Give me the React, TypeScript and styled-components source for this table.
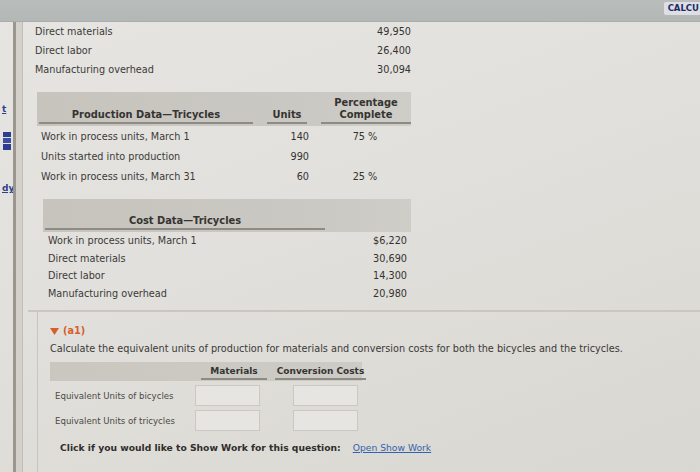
import React from "react";
import styled, { createGlobalStyle } from "styled-components";

const Global = createGlobalStyle`
  html, body { margin: 0; padding: 0; }
  body {
    width: 700px;
    height: 472px;
    overflow: hidden;
    background: linear-gradient(160deg, #e6e5e1 0%, #e2e0dc 45%, #d9d7d1 100%);
    font-family: "DejaVu Sans", Verdana, sans-serif;
    font-size: 9.7px;
    color: #3b3a38;
  }
`;

const TopBar = styled.div`
  height: 22px;
  background: linear-gradient(180deg, #b9bdbb 0%, #b3b8b6 100%);
  border-bottom: 1px solid #a9adab;
  box-sizing: border-box;
  display: flex;
  justify-content: flex-end;
  align-items: flex-start;
`;

const CalcButton = styled.div`
  margin-top: 2px;
  height: 13px;
  background: #dedfe4;
  border-radius: 2px 0 0 2px;
  color: #1e2a66;
  font-weight: bold;
  font-size: 8.5px;
  line-height: 13px;
  padding: 0 1px 0 4px;
  white-space: nowrap;
`;

const Main = styled.div`
  display: flex;
  height: 450px;
`;

const Sidebar = styled.div`
  width: 13px;
  display: flex;
  flex-direction: column;
  color: #2c3f8f;
  font-weight: bold;
  font-size: 9px;
  overflow: hidden;
`;

const SideFrag = styled.div<{ $top: number }>`
  margin-top: ${(p) => p.$top}px;
  padding-left: 2px;
  line-height: 10px;
  white-space: nowrap;
  text-decoration: underline;
`;

const SideIcon = styled.div`
  margin-top: 18px;
  padding-left: 3px;
  display: flex;
`;

const Panel = styled.div`
  flex: 1;
  border-left: 3px solid #9b978f;
  box-shadow: inset 6px 0 0 #d4d1cb, inset 7px 0 0 #c2beb7;
  display: flex;
  flex-direction: column;
`;

const SimpleBlock = styled.div`
  margin-left: 19px;
  width: 376px;
`;

const SimpleRow = styled.div`
  height: 19px;
  display: flex;
  align-items: center;
  justify-content: space-between;
`;

const Value = styled.span`
  color: #333230;
`;

const Table = styled.div<{ $left: number; $top: number; $width: number }>`
  margin-left: ${(p) => p.$left}px;
  margin-top: ${(p) => p.$top}px;
  width: ${(p) => p.$width}px;
`;

const HeadRow = styled.div<{ $cols: string; $height: number }>`
  display: grid;
  grid-template-columns: ${(p) => p.$cols};
  column-gap: 14px;
  align-items: end;
  height: ${(p) => p.$height}px;
  padding: 0 0 2px 2px;
  box-sizing: border-box;
  background: linear-gradient(90deg, #c6c4bd 0%, #cac8c2 70%, #cfcdc7 100%);
`;

const HeadCell = styled.div<{ $size?: number }>`
  font-weight: bold;
  font-size: ${(p) => p.$size || 9.9}px;
  color: #353432;
  text-align: center;
  line-height: 12px;
  padding-bottom: 1px;
  white-space: nowrap;
  border-bottom: 2px solid #8e8b85;
`;

const BodyRow = styled.div<{ $cols: string; $height: number; $pad: number }>`
  display: grid;
  grid-template-columns: ${(p) => p.$cols};
  column-gap: 14px;
  align-items: center;
  height: ${(p) => p.$height}px;
  padding: 0 4px 0 ${(p) => p.$pad}px;
`;

const Num = styled.span<{ $align?: string }>`
  text-align: ${(p) => p.$align || "right"};
  color: #333230;
`;

const Separator = styled.div`
  margin-top: 8px;
  margin-left: 12px;
  height: 2px;
  background: #cac7c1;
`;

const Section = styled.div`
  margin-left: 21px;
  flex: 1;
  border-left: 1px solid #c8c5be;
  padding: 13px 0 0 12px;
`;

const PartTitle = styled.div`
  display: flex;
  align-items: center;
  gap: 4px;
  color: #d5602c;
  font-weight: bold;
  line-height: 12px;
`;

const Prompt = styled.div`
  margin-top: 6px;
  line-height: 12px;
  color: #3a3937;
  white-space: nowrap;
`;

const AnswerHead = styled.div`
  margin-top: 7px;
  width: 312px;
  height: 19px;
  display: grid;
  grid-template-columns: 143px 66px 91px;
  column-gap: 8px;
  align-items: end;
  background: linear-gradient(90deg, #c9c7c0 0%, #cdcbc5 100%);
  padding-bottom: 1px;
  box-sizing: border-box;
`;

const AnswerGrid = styled.div`
  margin-top: 4px;
  display: grid;
  grid-template-columns: 145px 98px 65px;
  row-gap: 4px;
  align-items: center;
`;

const AnswerLabel = styled.div`
  padding-left: 5px;
  color: #4a4946;
  font-size: 8.6px;
  white-space: nowrap;
`;

const InputBox = styled.div`
  width: 65px;
  height: 21px;
  background: #e6e5e1;
  border: 1px solid #cbc8c2;
  box-sizing: border-box;
`;

const ShowWork = styled.div`
  margin-top: 11px;
  padding-left: 10px;
  display: flex;
  align-items: baseline;
  gap: 12px;
  line-height: 12px;
`;

const Bold = styled.span`
  font-weight: bold;
  font-size: 9.2px;
  color: #2f2e2c;
  white-space: nowrap;
`;

const Link = styled.a`
  color: #3461b0;
  font-size: 9.2px;
  text-decoration: underline;
  white-space: nowrap;
`;

const prodCols = "214px 40px 1fr";
const costCols = "280px 1fr";

export default function App() {
  return (
    <>
      <Global />
      <TopBar>
        <CalcButton>CALCU</CalcButton>
      </TopBar>
      <Main>
        <Sidebar>
          <SideFrag $top={82}>t</SideFrag>
          <SideIcon>
            <svg width="8" height="18" viewBox="0 0 8 18">
              <rect x="0" y="0" width="8" height="5" fill="#2c3f8f" />
              <rect x="0" y="6" width="8" height="5" fill="#3a4f9f" />
              <rect x="0" y="12" width="8" height="6" fill="#2c3f8f" />
            </svg>
          </SideIcon>
          <SideFrag $top={33}>dy</SideFrag>
        </Sidebar>
        <Panel>
          <SimpleBlock>
            <SimpleRow>
              <span>Direct materials</span>
              <Value>49,950</Value>
            </SimpleRow>
            <SimpleRow>
              <span>Direct labor</span>
              <Value>26,400</Value>
            </SimpleRow>
            <SimpleRow>
              <span>Manufacturing overhead</span>
              <Value>30,094</Value>
            </SimpleRow>
          </SimpleBlock>

          <Table $left={21} $top={13} $width={374}>
            <HeadRow $cols={prodCols} $height={34}>
              <HeadCell>Production Data—Tricycles</HeadCell>
              <HeadCell>Units</HeadCell>
              <HeadCell>
                Percentage
                <br />
                Complete
              </HeadCell>
            </HeadRow>
            <BodyRow $cols={prodCols} $height={20} $pad={4}>
              <span>Work in process units, March 1</span>
              <Num>140</Num>
              <Num $align="center">75 %</Num>
            </BodyRow>
            <BodyRow $cols={prodCols} $height={20} $pad={4}>
              <span>Units started into production</span>
              <Num>990</Num>
              <Num $align="center"></Num>
            </BodyRow>
            <BodyRow $cols={prodCols} $height={20} $pad={4}>
              <span>Work in process units, March 31</span>
              <Num>60</Num>
              <Num $align="center">25 %</Num>
            </BodyRow>
          </Table>

          <Table $left={27} $top={13} $width={368}>
            <HeadRow $cols={costCols} $height={33}>
              <HeadCell>Cost Data—Tricycles</HeadCell>
              <span />
            </HeadRow>
            <BodyRow $cols={costCols} $height={17.5} $pad={5}>
              <span>Work in process units, March 1</span>
              <Num>$6,220</Num>
            </BodyRow>
            <BodyRow $cols={costCols} $height={17.5} $pad={5}>
              <span>Direct materials</span>
              <Num>30,690</Num>
            </BodyRow>
            <BodyRow $cols={costCols} $height={17.5} $pad={5}>
              <span>Direct labor</span>
              <Num>14,300</Num>
            </BodyRow>
            <BodyRow $cols={costCols} $height={17.5} $pad={5}>
              <span>Manufacturing overhead</span>
              <Num>20,980</Num>
            </BodyRow>
          </Table>

          <Separator />
          <Section>
            <PartTitle>
              <svg width="9" height="7" viewBox="0 0 9 7">
                <polygon points="0,0 9,0 4.5,7" fill="#d5602c" />
              </svg>
              <span>(a1)</span>
            </PartTitle>
            <Prompt>
              Calculate the equivalent units of production for materials and conversion costs for both the bicycles and the tricycles.
            </Prompt>
            <AnswerHead>
              <span />
              <HeadCell $size={9}>Materials</HeadCell>
              <HeadCell $size={9}>Conversion Costs</HeadCell>
            </AnswerHead>
            <AnswerGrid>
              <AnswerLabel>Equivalent Units of bicycles</AnswerLabel>
              <InputBox />
              <InputBox />
              <AnswerLabel>Equivalent Units of tricycles</AnswerLabel>
              <InputBox />
              <InputBox />
            </AnswerGrid>
            <ShowWork>
              <Bold>Click if you would like to Show Work for this question:</Bold>
              <Link href="#">Open Show Work</Link>
            </ShowWork>
          </Section>
        </Panel>
      </Main>
    </>
  );
}
